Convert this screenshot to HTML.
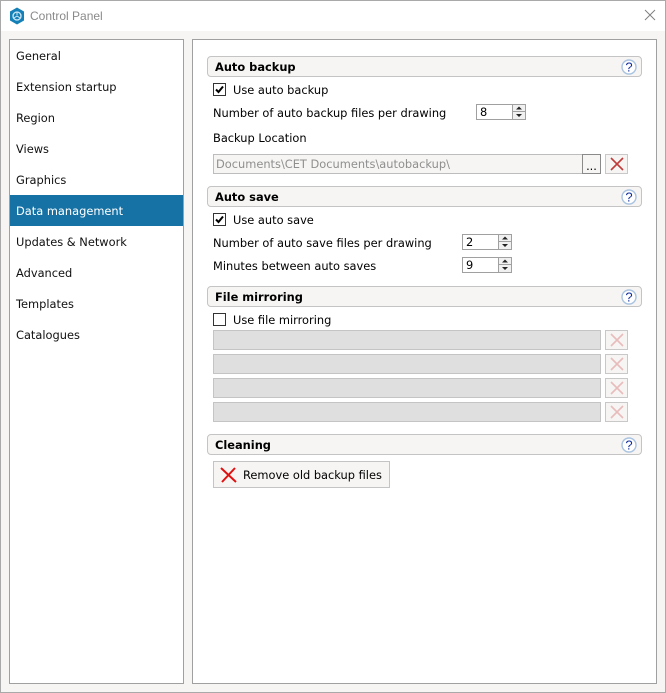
<!DOCTYPE html>
<html><head><meta charset="utf-8"><style>
html,body{margin:0;padding:0;background:#fff}
#w{position:relative;width:666px;height:693px;overflow:hidden;background:#f6f5f3;font:11.4px "DejaVu Sans",sans-serif;color:#000}
#w div,#w svg{position:absolute;box-sizing:border-box}
.t{white-space:nowrap;line-height:14px;height:14px}
.nav{left:16px;white-space:nowrap;line-height:14px;height:14px;color:#111}
.h{left:207px;width:435px;height:21px;background:#f6f5f3;border:1px solid #c4c4c4;border-radius:4px}
.ht{left:215px;font-weight:bold;white-space:nowrap;line-height:14px;height:14px}
.cb{width:13px;height:13px;left:213px;background:#fff;border:1px solid #333}
.sp{width:50px;height:16px;background:#fff;border:1px solid #a0a0a0;padding-left:3px;line-height:15px}
.sb{width:14px;height:16px;background:#a0a0a0}
.g{left:213px;width:388px;height:20px;background:#dfdfdf;border:1px solid #c4c4c4}
.xb{left:605px;width:23px;height:20px;background:#f6f5f3;border:1px solid #c8c8c8}
</style></head><body><div id="w">
<div style="left:0;top:0;width:666px;height:1px;background:#a9a9a9"></div>
<div style="left:0;top:0;width:1px;height:693px;background:#a9a9a9"></div>
<div style="left:665px;top:0;width:1px;height:693px;background:#a9a9a9"></div>
<div style="left:0;top:692px;width:666px;height:1px;background:#a9a9a9"></div>
<div style="left:1px;top:1px;width:664px;height:30px;background:#fff"></div>
<svg style="left:9px;top:7px" width="16" height="18" viewBox="0 0 16 18"><path d="M8 0.5L15 4.5V13.5L8 17.5L1 13.5V4.5Z" fill="#1580b8"/><circle cx="8" cy="9" r="4" fill="none" stroke="#cfe8f5" stroke-width="1.3"/><path d="M8 5V8M5 11L8 9L11 11" stroke="#cfe8f5" fill="none"/></svg>
<div class="t" style="left:30px;top:9px;font:12px/14px 'Liberation Sans',sans-serif;color:#8a8a8a">Control Panel</div>
<svg style="left:644px;top:9px" width="12" height="12" viewBox="0 0 12 12"><path d="M1 1L11 11M11 1L1 11" stroke="#808080" stroke-width="1"/></svg>

<div style="left:9px;top:39px;width:175px;height:645px;background:#fff;border:1px solid #a0a0a0"></div>
<div style="left:192px;top:39px;width:465px;height:645px;background:#fff;border:1px solid #a0a0a0"></div>
<div style="left:10px;top:195px;width:173px;height:31px;background:#1672a5"></div>
<div class="nav" style="top:49px">General</div>
<div class="nav" style="top:80px">Extension startup</div>
<div class="nav" style="top:111px">Region</div>
<div class="nav" style="top:142px">Views</div>
<div class="nav" style="top:173px">Graphics</div>
<div class="nav" style="top:204px;color:#fff">Data management</div>
<div class="nav" style="top:235px">Updates &amp; Network</div>
<div class="nav" style="top:266px">Advanced</div>
<div class="nav" style="top:297px">Templates</div>
<div class="nav" style="top:328px">Catalogues</div>

<div class="h" style="top:56px"></div><div class="ht" style="top:60px">Auto backup</div>
<div class="h" style="top:186px"></div><div class="ht" style="top:190px">Auto save</div>
<div class="h" style="top:286px"></div><div class="ht" style="top:290px">File mirroring</div>
<div class="h" style="top:434px"></div><div class="ht" style="top:438px">Cleaning</div>

<svg style="left:621px;top:59px" width="16" height="16" viewBox="0 0 16 16"><circle cx="8" cy="8" r="7" fill="#fff" stroke="#a9c3e0" stroke-width="1.4"/><text x="8" y="12.5" font-size="13" text-anchor="middle" fill="#12309e" font-family="Liberation Sans">?</text></svg>
<svg style="left:621px;top:189px" width="16" height="16" viewBox="0 0 16 16"><circle cx="8" cy="8" r="7" fill="#fff" stroke="#a9c3e0" stroke-width="1.4"/><text x="8" y="12.5" font-size="13" text-anchor="middle" fill="#12309e" font-family="Liberation Sans">?</text></svg>
<svg style="left:621px;top:289px" width="16" height="16" viewBox="0 0 16 16"><circle cx="8" cy="8" r="7" fill="#fff" stroke="#a9c3e0" stroke-width="1.4"/><text x="8" y="12.5" font-size="13" text-anchor="middle" fill="#12309e" font-family="Liberation Sans">?</text></svg>
<svg style="left:621px;top:437px" width="16" height="16" viewBox="0 0 16 16"><circle cx="8" cy="8" r="7" fill="#fff" stroke="#a9c3e0" stroke-width="1.4"/><text x="8" y="12.5" font-size="13" text-anchor="middle" fill="#12309e" font-family="Liberation Sans">?</text></svg>

<div class="cb" style="top:83px"></div>
<svg style="left:214px;top:84px" width="11" height="11" viewBox="0 0 11 11"><path d="M2 5.5L4.5 8L9 2.5" fill="none" stroke="#000" stroke-width="2"/></svg>
<div class="t" style="left:233px;top:83px">Use auto backup</div>
<div class="t" style="left:213px;top:106px">Number of auto backup files per drawing</div>
<div class="sp" style="left:476px;top:104px">8</div>
<div class="sb" style="left:512px;top:104px"></div>
<div style="left:513px;top:105px;width:12px;height:6px;background:#f0f0f0"></div><div style="left:513px;top:112px;width:12px;height:7px;background:#f0f0f0"></div>
<svg style="left:513px;top:105px" width="12" height="14"><path d="M3 4.5H9L6 1.5ZM3 9H9L6 12Z" fill="#222"/></svg>
<div class="t" style="left:213px;top:131px">Backup Location</div>
<div style="left:213px;top:154px;width:388px;height:20px;background:#f6f5f3;border:1px solid #bdbdbd"></div>
<div class="t" style="left:216px;top:157px;color:#8f8f8f">Documents\CET Documents\autobackup\</div>
<div style="left:582px;top:154px;width:19px;height:20px;background:#f6f5f3;border:1px solid #8a8a8a;text-align:center;line-height:22px">...</div>
<div class="xb" style="top:154px"></div>
<svg style="left:610px;top:157px" width="14" height="14"><path d="M1 1L13 13M13 1L1 13" stroke="#c23b3b" stroke-width="1.6"/></svg>

<div class="cb" style="top:213px"></div>
<svg style="left:214px;top:214px" width="11" height="11" viewBox="0 0 11 11"><path d="M2 5.5L4.5 8L9 2.5" fill="none" stroke="#000" stroke-width="2"/></svg>
<div class="t" style="left:233px;top:213px">Use auto save</div>
<div class="t" style="left:213px;top:236px">Number of auto save files per drawing</div>
<div class="sp" style="left:462px;top:234px">2</div>
<div class="sb" style="left:498px;top:234px"></div>
<div style="left:499px;top:235px;width:12px;height:6px;background:#f0f0f0"></div><div style="left:499px;top:242px;width:12px;height:7px;background:#f0f0f0"></div>
<svg style="left:499px;top:235px" width="12" height="14"><path d="M3 4.5H9L6 1.5ZM3 9H9L6 12Z" fill="#222"/></svg>
<div class="t" style="left:213px;top:259px">Minutes between auto saves</div>
<div class="sp" style="left:462px;top:257px">9</div>
<div class="sb" style="left:498px;top:257px"></div>
<div style="left:499px;top:258px;width:12px;height:6px;background:#f0f0f0"></div><div style="left:499px;top:265px;width:12px;height:7px;background:#f0f0f0"></div>
<svg style="left:499px;top:258px" width="12" height="14"><path d="M3 4.5H9L6 1.5ZM3 9H9L6 12Z" fill="#222"/></svg>

<div class="cb" style="top:313px"></div>
<div class="t" style="left:233px;top:313px">Use file mirroring</div>
<div class="g" style="top:330px"></div><div class="xb" style="top:330px"></div>
<svg style="left:610px;top:333px" width="14" height="14"><path d="M1 1L13 13M13 1L1 13" stroke="#e8bcbc" stroke-width="1.6"/></svg>
<div class="g" style="top:354px"></div><div class="xb" style="top:354px"></div>
<svg style="left:610px;top:357px" width="14" height="14"><path d="M1 1L13 13M13 1L1 13" stroke="#e8bcbc" stroke-width="1.6"/></svg>
<div class="g" style="top:378px"></div><div class="xb" style="top:378px"></div>
<svg style="left:610px;top:381px" width="14" height="14"><path d="M1 1L13 13M13 1L1 13" stroke="#e8bcbc" stroke-width="1.6"/></svg>
<div class="g" style="top:402px"></div><div class="xb" style="top:402px"></div>
<svg style="left:610px;top:405px" width="14" height="14"><path d="M1 1L13 13M13 1L1 13" stroke="#e8bcbc" stroke-width="1.6"/></svg>

<div style="left:213px;top:461px;width:177px;height:27px;background:#f6f5f3;border:1px solid #c4c4c4"></div>
<svg style="left:220px;top:467px" width="17" height="16"><path d="M1 1L16 15M15 1L2 15" stroke="#e01010" stroke-width="2"/></svg>
<div class="t" style="left:243px;top:468px">Remove old backup files</div>
</div></body></html>
